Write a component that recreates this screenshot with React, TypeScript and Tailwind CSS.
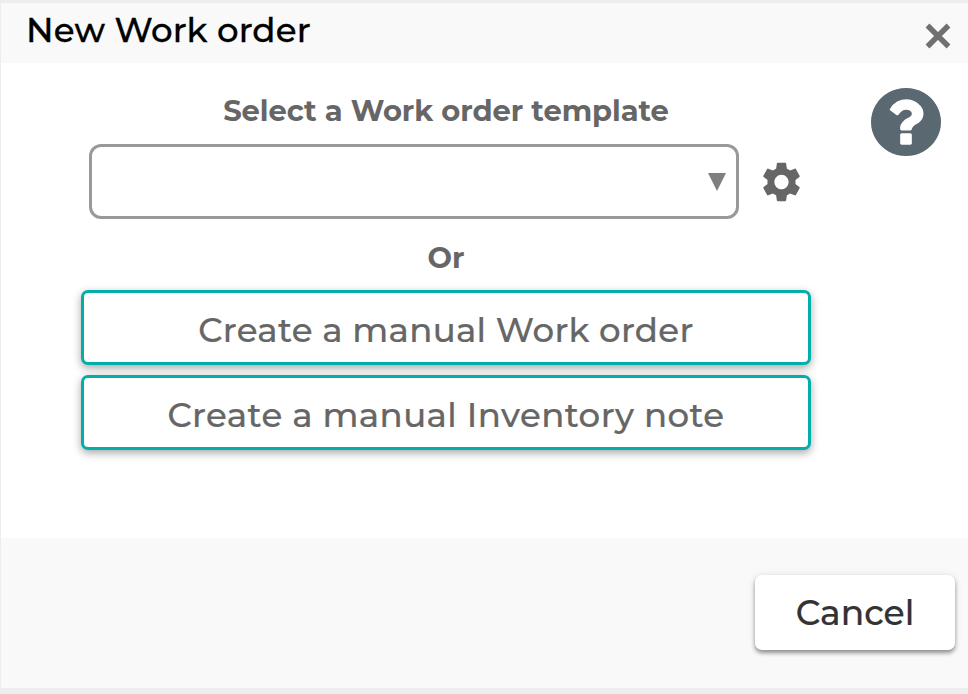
import React from 'react';

const CloseIcon: React.FC = () => (
  <svg width="26" height="26" viewBox="0 0 26 26" fill="none" stroke="#707070" strokeWidth="5.4">
    <path d="M2.500 2.500L23.500 23.500M23.500 2.500L2.500 23.500" />
  </svg>
);

const GearIcon: React.FC = () => (
  <svg width="45" height="46" viewBox="0 0 24 24" preserveAspectRatio="none" fill="#666666">
    <path d="M19.430 12.980c.04-.32.07-.64.07-.98s-.03-.66-.07-.98l2.110-1.650c.19-.15.24-.42.12-.64l-2-3.460c-.12-.22-.39-.3-.61-.22l-2.490 1c-.52-.4-1.080-.73-1.690-.98l-.38-2.650C14.460 2.180 14.250 2 14 2h-4c-.25 0-.46.18-.49.42l-.38 2.650c-.61.25-1.170.59-1.690.98l-2.490-1c-.23-.09-.49 0-.61.22l-2 3.460c-.13.22-.07.49.12.64l2.110 1.650c-.04.32-.07.65-.07.98s.03.66.07.98l-2.110 1.650c-.19.15-.24.42-.12.64l2 3.460c.12.22.39.3.61.22l2.490-1c.52.4 1.080.73 1.690.98l.38 2.650c.03.24.24.42.49.42h4c.25 0 .46-.18.49-.42l.38-2.650c.61-.25 1.170-.59 1.690-.98l2.490 1c.23.09.49 0 .61-.22l2-3.460c.12-.22.07-.49-.12-.64l-2.110-1.650zM12 15.800c-2.100 0-3.800-1.700-3.800-3.800s1.700-3.800 3.800-3.800 3.800 1.700 3.800 3.800-1.700 3.800-3.800 3.800z" />
  </svg>
);

const HelpIcon: React.FC = () => (
  <svg width="70" height="68" viewBox="0 0 1536 1536" preserveAspectRatio="none" fill="#5a6872">
    <path d="M896 1248v-192q0-14-9-23t-23-9H672q-14 0-23 9t-9 23v192q0 14 9 23t23 9h192q14 0 23-9t9-23zm256-672q0-88-55.500-163T958 297t-170-41q-243 0-371 213-15 24 8 42l132 100q7 6 19 6 16 0 25-12 53-68 86-92 34-24 86-24 48 0 85.500 26t37.500 59q0 38-20 61t-68 45q-63 28-115.500 86.500T640 892v36q0 14 9 23t23 9h192q14 0 23-9t9-23q0-19 21.500-49.500T972 829q32-18 49-28.500t46-35 44.500-48 28-60.500 12.500-81zm384 192q0 209-103 385.500T1153.500 1433 768 1536t-385.500-103T103 1153.500 0 768t103-385.500T382.500 103 768 0t385.500 103T1433 382.500 1536 768z" />
  </svg>
);

interface ActionButtonProps {
  children: React.ReactNode;
  className?: string;
}

const ActionButton: React.FC<ActionButtonProps> = ({ children, className = '' }) => (
  <button
    className={`flex h-[75px] w-[730px] items-center justify-center rounded-[7px] border-[3px] border-[#00aeaa] bg-white pt-1 text-[34px] font-medium text-[#666666] shadow-[0_3px_8px_rgba(0,0,0,0.35)] [-webkit-text-stroke:0.2px_#666666] ${className}`}
  >
    {children}
  </button>
);

const App: React.FC = () => {
  return (
    <div className="flex h-[694px] w-[968px] flex-col overflow-hidden border-t-[3px] border-b-[6px] border-l border-[#ededed] bg-white font-['Montserrat','Inter',sans-serif] leading-none whitespace-nowrap">
      {/* Header */}
      <header className="flex h-[60px] shrink-0 justify-between bg-[#f9f9f9] pt-[9px] pr-[17px] pl-[25px]">
        <h1 className="text-[34px] leading-[36px] font-medium tracking-[0.15px] text-black [-webkit-text-stroke:0.3px_#000000]">
          New Work order
        </h1>
        <button aria-label="Close" className="mt-[10.5px] h-[26px] w-[26px]">
          <CloseIcon />
        </button>
      </header>

      {/* Body */}
      <main className="flex h-[475px] shrink-0 pt-[25px] pl-20">
        <div className="flex w-[730px] flex-col items-center">
          <h2 className="mt-[3px] h-[40px] text-[29px] leading-[40px] font-bold tracking-[-0.05px] text-[#666666]">
            Select a Work order template
          </h2>
          <div className="mt-[13px] flex h-[75px] w-full items-center pl-2">
            <button
              aria-label="Work order template"
              className="flex h-[75px] w-[650px] shrink-0 items-center justify-end rounded-xl border-[3px] border-[#999999] bg-white pr-[10px]"
            >
              <svg width="18" height="18" viewBox="0 0 18 18" fill="#808080">
                <path d="M0 0h18L9 18z" />
              </svg>
            </button>
            <button aria-label="Template settings" className="ml-5 shrink-0">
              <GearIcon />
            </button>
          </div>
          <p className="mt-[19px] h-[40px] text-[29px] leading-[40px] font-bold text-[#666666]">Or</p>
          <div className="mt-[12px] flex flex-col gap-[10px]">
            <ActionButton className="tracking-[0.3px]">Create a manual Work order</ActionButton>
            <ActionButton className="tracking-[0.42px]">Create a manual Inventory note</ActionButton>
          </div>
        </div>
        <button aria-label="Help" className="ml-[60px] h-[68px] w-[70px] shrink-0">
          <HelpIcon />
        </button>
      </main>

      {/* Footer */}
      <footer className="flex h-[150px] shrink-0 justify-end bg-[#f9f9f9] pt-[37px] pr-[13px]">
        <button className="flex h-[75px] w-[200px] items-center justify-center rounded-[7px] bg-white pt-px text-[34.5px] font-medium text-[#333333] shadow-[0_3px_4px_rgba(0,0,0,0.4),0_0_8px_rgba(0,0,0,0.08)] [-webkit-text-stroke:0.2px_#333333]">
          Cancel
        </button>
      </footer>
    </div>
  );
};

export default App;
